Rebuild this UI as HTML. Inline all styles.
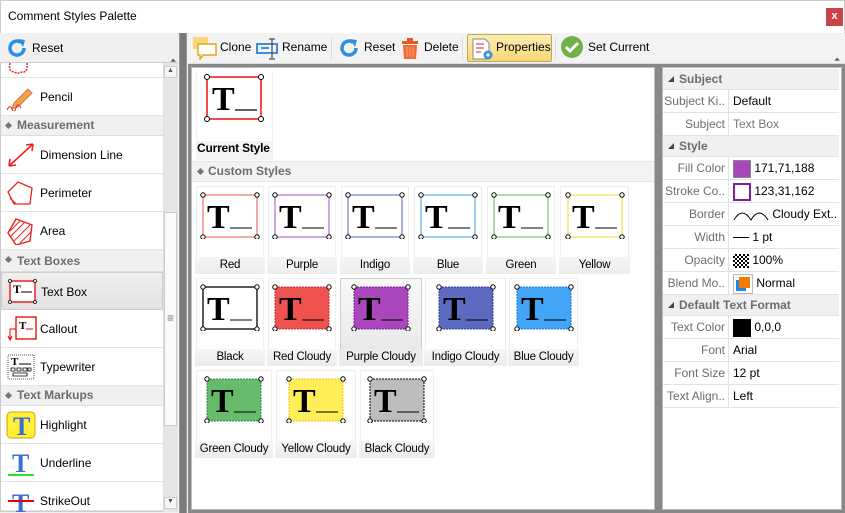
<!DOCTYPE html>
<html><head><meta charset="utf-8"><style>
*{box-sizing:border-box;margin:0;padding:0}
body{width:845px;height:513px;overflow:hidden;background:#f0f0f0;font-family:"Liberation Sans",sans-serif;font-size:12px;color:#000;position:relative}
.a{position:absolute}
.title{left:0;top:0;width:845px;height:33px;background:#fff;border:1px solid #ccc;border-bottom:none}
.close{left:826px;top:8px;width:17px;height:18px;background:#c9434a;color:#fff;font-size:11px;text-align:center;line-height:17px;font-weight:bold}
.lrow{left:1px;width:162px;height:38px;background:#fff;border-bottom:1px solid #e4e4e4}
.lrow span{position:absolute;left:39px;top:12px;font-size:12px}
.lrow svg{position:absolute;left:5px;top:5px}
.lhdr{left:1px;width:162px;background:#f0f0f0;border-bottom:1px solid #ddd;color:#6d6d6d;font-weight:bold;font-size:12px;padding-left:16px}
.lhdr:before{content:"";position:absolute;left:5px;top:7px;width:5px;height:5px;background:#777;transform:rotate(45deg)}
.tile{background:#f3f3f3;border:1px solid #eee}
.tile .im{position:absolute;left:0;right:0;top:0;height:70px;background:#fff;display:flex;justify-content:center;padding-top:4px}
.tile .lb{position:absolute;left:-2px;right:-2px;top:70px;height:17px;text-align:center;line-height:17px;font-size:11.5px;letter-spacing:-0.2px;white-space:nowrap;background:linear-gradient(#f5f5f5,#ececec)}
.prow{left:0;width:176px;height:23px;border-bottom:1px solid #e2e2e2;background:#fff}
.prow .k{position:absolute;left:0;width:66px;height:22px;text-align:right;color:#6d6d6d;line-height:22px;border-right:1px solid #e2e2e2;padding-right:3px;white-space:nowrap;overflow:hidden}
.prow .v{position:absolute;left:70px;top:0;line-height:22px;white-space:nowrap}
.phdr{left:0;width:176px;height:21px;background:#f0f0f0;border-bottom:1px solid #e2e2e2;font-weight:bold;color:#6d6d6d;line-height:20px;padding-left:16px}
.phdr:before{content:"";position:absolute;left:5px;top:7px;border-left:6px solid transparent;border-bottom:6px solid #444}
.tb{top:40px;font-size:12px}
</style></head><body>
<div class="a title"></div>
<div class="a" style="left:8px;top:9px;font-size:12px">Comment Styles Palette</div>
<div class="a close">x</div>

<div class="a" style="left:0;top:33px;width:178px;height:480px;background:#f0f0f0"></div>
<svg class="a" style="left:6px;top:37px" width="22" height="22" viewBox="0 0 22 22"><path d="M18 11a7 7 0 1 1-3-5.7" fill="none" stroke="#2d8fe0" stroke-width="3.5"/><path d="M12 2l7 1-2 7z" fill="#2d8fe0"/></svg>
<div class="a" style="left:32px;top:41px">Reset</div>
<div class="a" style="left:0;top:62px;width:178px;height:450px;border:1px solid #ccc;background:#fff"></div>
<div class="a lrow" style="top:63px;height:15px"><svg width="30" height="12" style="top:0"><path d="M4 0q-2 8 4 9q4 2 8 0q6 1 5-9" fill="none" stroke="#e22" stroke-width="1.5" stroke-dasharray="2 1"/></svg></div>
<div class="a lrow" style="top:78px"><svg width="30" height="28"><path d="M8 20L22 6l4 4-14 14-6 2z" fill="#f4a23a" stroke="#c77"/><path d="M1 27q3-6 5-1t4-1 5 0" fill="none" stroke="#e22"/></svg><span>Pencil</span></div>
<div class="a lhdr" style="top:116px;height:20px;line-height:19px">Measurement</div>
<div class="a lrow" style="top:136px"><svg width="30" height="28"><path d="M3 25L27 3M3 25l1-7M3 25l7-1M27 3l-7 1M27 3l-1 7" fill="none" stroke="#e22" stroke-width="1.6"/></svg><span>Dimension Line</span></div>
<div class="a lrow" style="top:174px"><svg width="30" height="28"><path d="M12 3l14 6-2 16-16 0-6-12zM4 19l6 6" fill="none" stroke="#e22" stroke-width="1.3"/></svg><span>Perimeter</span></div>
<div class="a lrow" style="top:212px"><svg width="30" height="28"><path d="M10 2l16 6-2 16-14 4-8-12z" fill="none" stroke="#e22" stroke-width="1.4"/><path d="M4 14l10-10M4 20l15-15M8 24l16-16M14 26l11-11" stroke="#e22"/></svg><span>Area</span></div>
<div class="a lhdr" style="top:250px;height:22px;line-height:22px">Text Boxes</div>
<div class="a lrow" style="top:272px;background:linear-gradient(#efefef,#e2e2e2);border:1px solid #ccc"><svg width="30" height="28"><rect x="3" y="3" width="25" height="21" fill="#fff" stroke="#e00" stroke-width="1.3"/><text x="6" y="15" font-family="Liberation Serif" font-weight="bold" font-size="12">T</text><path d="M14 14h11" stroke="#000"/><g fill="#fff" stroke="#000" stroke-width=".8"><circle cx="3" cy="3" r="1.5"/><circle cx="28" cy="3" r="1.5"/><circle cx="3" cy="24" r="1.5"/><circle cx="28" cy="24" r="1.5"/></g></svg><span>Text Box</span></div>
<div class="a lrow" style="top:310px"><svg width="32" height="30"><rect x="10" y="2" width="20" height="22" fill="#fff" stroke="#e00" stroke-width="1.3"/><text x="13" y="14" font-family="Liberation Serif" font-weight="bold" font-size="11">T</text><path d="M20 14h7M10 14H4v10M2 21l2 4 2-4" stroke="#e00" fill="none"/></svg><span>Callout</span></div>
<div class="a lrow" style="top:348px"><svg width="30" height="28"><rect x="2" y="2" width="26" height="24" fill="#fff" stroke="#555" stroke-dasharray="1 1"/><text x="5" y="12" font-family="Liberation Serif" font-weight="bold" font-size="11">T</text><path d="M13 11h12" stroke="#000"/><path d="M5 15h4v3H5zM11 15h4v3h-4zM17 15h4v3h-4zM22 15h3v3h-3zM7 20h14v3H7z" fill="none" stroke="#000" stroke-width=".8"/></svg><span>Typewriter</span></div>
<div class="a lhdr" style="top:386px;height:20px;line-height:19px">Text Markups</div>
<div class="a lrow" style="top:406px"><svg width="30" height="28"><rect x="1" y="1" width="28" height="26" rx="4" fill="#ffef3a" stroke="#c8a800"/><text x="7" y="24" font-family="Liberation Serif" font-weight="bold" font-size="26" fill="#3a6fd0">T</text></svg><span>Highlight</span></div>
<div class="a lrow" style="top:444px"><svg width="30" height="28"><text x="6" y="23" font-family="Liberation Serif" font-weight="bold" font-size="26" fill="#3a6fd0">T</text><path d="M2 26h26" stroke="#2ddf2d" stroke-width="2"/></svg><span>Underline</span></div>
<div class="a lrow" style="top:482px;height:29px"><svg width="30" height="26"><text x="6" y="25" font-family="Liberation Serif" font-weight="bold" font-size="26" fill="#3a6fd0">T</text><path d="M2 14h26" stroke="#e00" stroke-width="2"/></svg><span style="top:12px">StrikeOut</span></div>
<div class="a" style="left:163px;top:63px;width:15px;height:449px;background:#e6e6e6;border-left:1px solid #ddd"></div>
<div class="a" style="left:164px;top:66px;width:13px;height:12px;background:#f6f6f6;border:1px solid #ccc;font-size:7px;text-align:center;color:#555">▲</div>
<div class="a" style="left:164px;top:212px;width:13px;height:214px;background:#fafafa;border:1px solid #ccc;text-align:center;color:#777;line-height:210px">≡</div>
<div class="a" style="left:164px;top:497px;width:13px;height:12px;background:#f6f6f6;border:1px solid #ccc;font-size:7px;text-align:center;color:#555">▼</div>
<div class="a" style="left:170px;top:56px;font-size:8px;color:#555">⏶</div>

<div class="a" style="left:179px;top:33px;width:8px;height:480px;background:#7a7a7a;border-left:1px solid #999;border-right:1px solid #999"></div>

<div class="a" style="left:188px;top:33px;width:657px;height:31px;background:#f3f3f3;border-bottom:1px solid #ddd"></div>
<svg class="a" style="left:192px;top:36px" width="26" height="24"><rect x="1" y="1" width="15" height="12" fill="#f7d77a"/><path d="M6 8h18v11H11l-3 4v-4H6z" fill="#fff" stroke="#e3a50f" stroke-width="1.4"/></svg>
<div class="a tb" style="left:220px">Clone</div>
<svg class="a" style="left:256px;top:38px" width="24" height="22"><rect x="1" y="6" width="20" height="9" fill="none" stroke="#3f8ee0" stroke-width="2"/><path d="M5 10h8" stroke="#3f8ee0" stroke-width="2"/><path d="M16 1v20M13 1h6M13 21h6" stroke="#555" stroke-width="1.3"/></svg>
<div class="a tb" style="left:282px">Rename</div>
<div class="a" style="left:331px;top:38px;width:1px;height:22px;background:#ddd"></div>
<svg class="a" style="left:338px;top:37px" width="22" height="22" viewBox="0 0 22 22"><path d="M18 11a7 7 0 1 1-3-5.7" fill="none" stroke="#2d8fe0" stroke-width="3.5"/><path d="M12 2l7 1-2 7z" fill="#2d8fe0"/></svg>
<div class="a tb" style="left:364px">Reset</div>
<svg class="a" style="left:400px;top:36px" width="20" height="24"><rect x="2" y="5" width="16" height="3" fill="#e05a2c"/><rect x="7" y="2" width="6" height="3" fill="#e05a2c"/><path d="M3 9h14l-1 14H4z" fill="#f06a33"/><path d="M7 11v10M10 11v10M13 11v10" stroke="#ffa07a"/></svg>
<div class="a tb" style="left:424px">Delete</div>
<div class="a" style="left:462px;top:38px;width:1px;height:22px;background:#ddd"></div>
<div class="a" style="left:467px;top:34px;width:85px;height:28px;background:linear-gradient(#fdeeb0,#f7d877);border:1px solid #c5a55a;border-radius:2px"></div>
<svg class="a" style="left:470px;top:37px" width="24" height="24"><path d="M3 2h12l4 4v16H3z" fill="#fff" stroke="#888"/><path d="M6 7h8M6 11h8M6 15h5" stroke="#d55" stroke-width="1.3"/><circle cx="18" cy="18" r="4.5" fill="#3a92e0"/><circle cx="18" cy="18" r="1.6" fill="#fff"/></svg>
<div class="a tb" style="left:496px">Properties</div>
<div class="a" style="left:555px;top:38px;width:1px;height:22px;background:#ddd"></div>
<svg class="a" style="left:560px;top:35px" width="24" height="24"><circle cx="12" cy="12" r="11" fill="#6fb24a"/><path d="M6 12l4 4 8-8" fill="none" stroke="#fff" stroke-width="3"/></svg>
<div class="a tb" style="left:588px">Set Current</div>
<div class="a" style="left:834px;top:55px;font-size:8px;color:#555">⏶</div>

<div class="a" style="left:188px;top:64px;width:470px;height:449px;background:#888"></div>
<div class="a" style="left:191px;top:67px;width:464px;height:443px;background:#fff;border:1px solid #bbb"></div>
<div class="a" style="left:196px;top:70px;width:77px;height:90px;background:#f3f3f3"></div>
<div class="a" style="left:197px;top:70px;width:75px;height:71px;background:#fff"></div>
<svg class="a" style="left:202px;top:73px" width="64" height="50"><rect x="5" y="4" width="54" height="42" fill="none" stroke="#e00" stroke-width="1.4"/><text x="10" y="37" font-family="Liberation Serif" font-weight="bold" font-size="34">T</text><path d="M33 37h22" stroke="#000" stroke-width="1.2"/><g fill="#fff" stroke="#000"><circle cx="5" cy="4" r="2.5"/><circle cx="59" cy="4" r="2.5"/><circle cx="5" cy="46" r="2.5"/><circle cx="59" cy="46" r="2.5"/></g></svg>
<div class="a" style="left:197px;top:140px;font-weight:bold;font-size:12px;line-height:17px;white-space:nowrap;letter-spacing:-0.2px">Current Style</div>
<div class="a" style="left:192px;top:161px;width:462px;height:21px;background:#f3f3f3;border-top:1px solid #e6e6e6;border-bottom:1px solid #e6e6e6;color:#6d6d6d;font-weight:bold;line-height:19px;padding-left:16px">Custom Styles</div>
<div class="a" style="left:198px;top:169px;width:5px;height:5px;background:#777;transform:rotate(45deg)"></div>

<div class="a tile" style="left:196px;top:186px;width:68px;height:88px"><div class="im"><svg width="62" height="48"><rect x="4" y="4" width="54" height="42" fill="#fff" stroke="#ee4f4f"/><text x="8" y="37" font-family="Liberation Serif" font-weight="bold" font-size="34">T</text><path d="M31 37h22" stroke="#000"/><g fill="#fff" stroke="#000"><circle cx="4" cy="4" r="2.2"/><circle cx="58" cy="4" r="2.2"/><circle cx="4" cy="46" r="2.2"/><circle cx="58" cy="46" r="2.2"/></g></svg></div><div class="lb">Red</div></div>
<div class="a tile" style="left:268px;top:186px;width:68px;height:88px"><div class="im"><svg width="62" height="48"><rect x="4" y="4" width="54" height="42" fill="#fff" stroke="#a148c0"/><text x="8" y="37" font-family="Liberation Serif" font-weight="bold" font-size="34">T</text><path d="M31 37h22" stroke="#000"/><g fill="#fff" stroke="#000"><circle cx="4" cy="4" r="2.2"/><circle cx="58" cy="4" r="2.2"/><circle cx="4" cy="46" r="2.2"/><circle cx="58" cy="46" r="2.2"/></g></svg></div><div class="lb">Purple</div></div>
<div class="a tile" style="left:341px;top:186px;width:68px;height:88px"><div class="im"><svg width="62" height="48"><rect x="4" y="4" width="54" height="42" fill="#fff" stroke="#5060c0"/><text x="8" y="37" font-family="Liberation Serif" font-weight="bold" font-size="34">T</text><path d="M31 37h22" stroke="#000"/><g fill="#fff" stroke="#000"><circle cx="4" cy="4" r="2.2"/><circle cx="58" cy="4" r="2.2"/><circle cx="4" cy="46" r="2.2"/><circle cx="58" cy="46" r="2.2"/></g></svg></div><div class="lb">Indigo</div></div>
<div class="a tile" style="left:414px;top:186px;width:68px;height:88px"><div class="im"><svg width="62" height="48"><rect x="4" y="4" width="54" height="42" fill="#fff" stroke="#3d9de8"/><text x="8" y="37" font-family="Liberation Serif" font-weight="bold" font-size="34">T</text><path d="M31 37h22" stroke="#000"/><g fill="#fff" stroke="#000"><circle cx="4" cy="4" r="2.2"/><circle cx="58" cy="4" r="2.2"/><circle cx="4" cy="46" r="2.2"/><circle cx="58" cy="46" r="2.2"/></g></svg></div><div class="lb">Blue</div></div>
<div class="a tile" style="left:487px;top:186px;width:68px;height:88px"><div class="im"><svg width="62" height="48"><rect x="4" y="4" width="54" height="42" fill="#fff" stroke="#5cb85c"/><text x="8" y="37" font-family="Liberation Serif" font-weight="bold" font-size="34">T</text><path d="M31 37h22" stroke="#000"/><g fill="#fff" stroke="#000"><circle cx="4" cy="4" r="2.2"/><circle cx="58" cy="4" r="2.2"/><circle cx="4" cy="46" r="2.2"/><circle cx="58" cy="46" r="2.2"/></g></svg></div><div class="lb">Green</div></div>
<div class="a tile" style="left:560px;top:186px;width:69px;height:88px"><div class="im"><svg width="62" height="48"><rect x="4" y="4" width="54" height="42" fill="#fff" stroke="#f0d820"/><text x="8" y="37" font-family="Liberation Serif" font-weight="bold" font-size="34">T</text><path d="M31 37h22" stroke="#000"/><g fill="#fff" stroke="#000"><circle cx="4" cy="4" r="2.2"/><circle cx="58" cy="4" r="2.2"/><circle cx="4" cy="46" r="2.2"/><circle cx="58" cy="46" r="2.2"/></g></svg></div><div class="lb">Yellow</div></div>
<div class="a tile" style="left:196px;top:278px;width:68px;height:88px"><div class="im"><svg width="62" height="48"><rect x="4" y="4" width="54" height="42" fill="#fff" stroke="#000" stroke-width="1.3"/><text x="8" y="37" font-family="Liberation Serif" font-weight="bold" font-size="34">T</text><path d="M31 37h22" stroke="#000"/><g fill="#fff" stroke="#000"><circle cx="4" cy="4" r="2.2"/><circle cx="58" cy="4" r="2.2"/><circle cx="4" cy="46" r="2.2"/><circle cx="58" cy="46" r="2.2"/></g></svg></div><div class="lb">Black</div></div>
<div class="a tile" style="left:268px;top:278px;width:68px;height:88px"><div class="im"><svg width="62" height="48"><rect x="4" y="4" width="54" height="42" fill="#ef5350" stroke="#c03030" stroke-dasharray="2 1"/><text x="8" y="37" font-family="Liberation Serif" font-weight="bold" font-size="34">T</text><path d="M31 37h22" stroke="#000"/><g fill="#fff" stroke="#000"><circle cx="4" cy="4" r="2.2"/><circle cx="58" cy="4" r="2.2"/><circle cx="4" cy="46" r="2.2"/><circle cx="58" cy="46" r="2.2"/></g></svg></div><div class="lb">Red Cloudy</div></div>
<div class="a tile" style="left:340px;top:278px;width:82px;height:88px;border:1px solid #ccc;background:#ebebeb"><div class="im" style="background:linear-gradient(#f8f8f8,#e9e9e9)"><svg width="62" height="48"><rect x="4" y="4" width="54" height="42" fill="#ab47bc" stroke="#7b1fa2" stroke-dasharray="2 1"/><text x="8" y="37" font-family="Liberation Serif" font-weight="bold" font-size="34">T</text><path d="M31 37h22" stroke="#000"/><g fill="#fff" stroke="#000"><circle cx="4" cy="4" r="2.2"/><circle cx="58" cy="4" r="2.2"/><circle cx="4" cy="46" r="2.2"/><circle cx="58" cy="46" r="2.2"/></g></svg></div><div class="lb" style="background:#ebebeb">Purple Cloudy</div></div>
<div class="a tile" style="left:425px;top:278px;width:81px;height:88px"><div class="im"><svg width="62" height="48"><rect x="4" y="4" width="54" height="42" fill="#5c6bc0" stroke="#303f9f" stroke-dasharray="2 1"/><text x="8" y="37" font-family="Liberation Serif" font-weight="bold" font-size="34">T</text><path d="M31 37h22" stroke="#000"/><g fill="#fff" stroke="#000"><circle cx="4" cy="4" r="2.2"/><circle cx="58" cy="4" r="2.2"/><circle cx="4" cy="46" r="2.2"/><circle cx="58" cy="46" r="2.2"/></g></svg></div><div class="lb">Indigo Cloudy</div></div>
<div class="a tile" style="left:509px;top:278px;width:69px;height:88px"><div class="im"><svg width="62" height="48"><rect x="4" y="4" width="54" height="42" fill="#42a5f5" stroke="#1976d2" stroke-dasharray="2 1"/><text x="8" y="37" font-family="Liberation Serif" font-weight="bold" font-size="34">T</text><path d="M31 37h22" stroke="#000"/><g fill="#fff" stroke="#000"><circle cx="4" cy="4" r="2.2"/><circle cx="58" cy="4" r="2.2"/><circle cx="4" cy="46" r="2.2"/><circle cx="58" cy="46" r="2.2"/></g></svg></div><div class="lb">Blue Cloudy</div></div>
<div class="a tile" style="left:196px;top:370px;width:76px;height:88px"><div class="im"><svg width="62" height="48"><rect x="4" y="4" width="54" height="42" fill="#66bb6a" stroke="#388e3c" stroke-dasharray="2 1"/><text x="8" y="37" font-family="Liberation Serif" font-weight="bold" font-size="34">T</text><path d="M31 37h22" stroke="#000"/><g fill="#fff" stroke="#000"><circle cx="4" cy="4" r="2.2"/><circle cx="58" cy="4" r="2.2"/><circle cx="4" cy="46" r="2.2"/><circle cx="58" cy="46" r="2.2"/></g></svg></div><div class="lb">Green Cloudy</div></div>
<div class="a tile" style="left:276px;top:370px;width:80px;height:88px"><div class="im"><svg width="62" height="48"><rect x="4" y="4" width="54" height="42" fill="#ffee58" stroke="#f0c020" stroke-dasharray="2 1"/><text x="8" y="37" font-family="Liberation Serif" font-weight="bold" font-size="34">T</text><path d="M31 37h22" stroke="#000"/><g fill="#fff" stroke="#000"><circle cx="4" cy="4" r="2.2"/><circle cx="58" cy="4" r="2.2"/><circle cx="4" cy="46" r="2.2"/><circle cx="58" cy="46" r="2.2"/></g></svg></div><div class="lb">Yellow Cloudy</div></div>
<div class="a tile" style="left:360px;top:370px;width:74px;height:88px"><div class="im"><svg width="62" height="48"><rect x="4" y="4" width="54" height="42" fill="#bdbdbd" stroke="#000" stroke-dasharray="2 1"/><text x="8" y="37" font-family="Liberation Serif" font-weight="bold" font-size="34">T</text><path d="M31 37h22" stroke="#000"/><g fill="#fff" stroke="#000"><circle cx="4" cy="4" r="2.2"/><circle cx="58" cy="4" r="2.2"/><circle cx="4" cy="46" r="2.2"/><circle cx="58" cy="46" r="2.2"/></g></svg></div><div class="lb">Black Cloudy</div></div>

<div class="a" style="left:658px;top:64px;width:187px;height:449px;background:#888"></div>
<div class="a" style="left:662px;top:67px;width:180px;height:443px;background:#fff;border:1px solid #bbb">
 <div class="a phdr" style="top:1px">Subject</div>
 <div class="a prow" style="top:22px"><div class="k">Subject Ki..</div><div class="v">Default</div></div>
 <div class="a prow" style="top:45px"><div class="k">Subject</div><div class="v" style="color:#777">Text Box</div></div>
 <div class="a phdr" style="top:68px">Style</div>
 <div class="a prow" style="top:89px"><div class="k">Fill Color</div><div class="v"><span style="display:inline-block;width:18px;height:18px;background:#ab47bc;vertical-align:middle;border:1px solid #888"></span> 171,71,188</div></div>
 <div class="a prow" style="top:112px"><div class="k">Stroke Co..</div><div class="v"><span style="display:inline-block;width:18px;height:18px;background:#fff;border:2px solid #7b1fa2;vertical-align:middle"></span> 123,31,162</div></div>
 <div class="a prow" style="top:135px"><div class="k">Border</div><div class="v"><svg width="36" height="12" style="vertical-align:middle"><path d="M1 11q8-14 17 0q8-14 17 0" fill="none" stroke="#000"/></svg> Cloudy Ext..</div></div>
 <div class="a prow" style="top:158px"><div class="k">Width</div><div class="v"><span style="display:inline-block;width:16px;height:1px;background:#000;vertical-align:middle"></span> 1 pt</div></div>
 <div class="a prow" style="top:181px"><div class="k">Opacity</div><div class="v"><span style="display:inline-block;width:16px;height:14px;vertical-align:middle;background:repeating-conic-gradient(#000 0 25%,#fff 0 50%) 0 0/4px 4px"></span> 100%</div></div>
 <div class="a prow" style="top:204px"><div class="k">Blend Mo..</div><div class="v"><svg width="20" height="20" style="vertical-align:middle"><rect x=".5" y=".5" width="19" height="19" fill="#fff" stroke="#bbb"/><rect x="3" y="6" width="10" height="11" fill="#1e88e5"/><rect x="6" y="3" width="11" height="11" fill="#f57c00"/></svg> Normal</div></div>
 <div class="a phdr" style="top:227px">Default Text Format</div>
 <div class="a prow" style="top:248px"><div class="k">Text Color</div><div class="v"><span style="display:inline-block;width:18px;height:18px;background:#000;vertical-align:middle"></span> 0,0,0</div></div>
 <div class="a prow" style="top:271px"><div class="k">Font</div><div class="v">Arial</div></div>
 <div class="a prow" style="top:294px"><div class="k">Font Size</div><div class="v">12 pt</div></div>
 <div class="a prow" style="top:317px"><div class="k">Text Align..</div><div class="v">Left</div></div>
</div>
</body></html>
